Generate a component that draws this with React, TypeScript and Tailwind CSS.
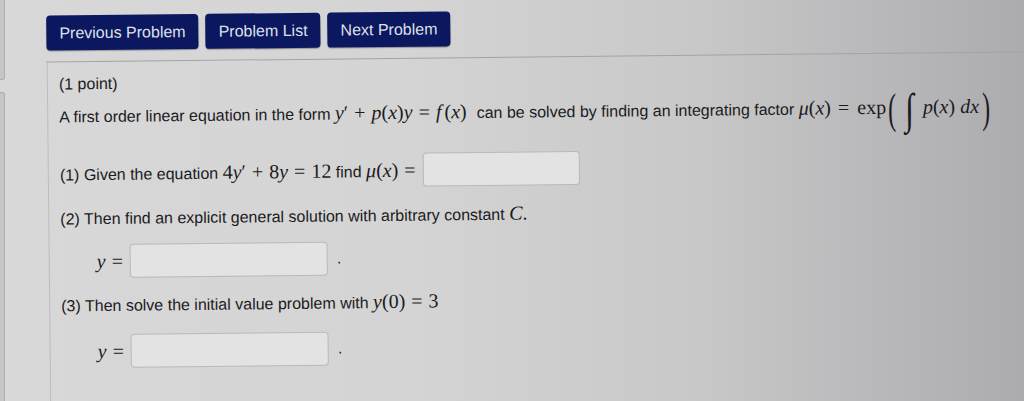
import React from 'react';

const serif = "font-['Liberation_Serif','Times_New_Roman',serif]";

const Op: React.FC<{ children: React.ReactNode }> = ({ children }) => (
  <span className="mx-[6px] not-italic">{children}</span>
);

const AnswerBox: React.FC<{ w: string }> = ({ w }) => (
  <div className={`${w} h-[34px] rounded-[4px] border border-[#b9b9bb] bg-[#e3e3e3]`} />
);

const NavButton: React.FC<{ label: string }> = ({ label }) => (
  <button className="h-[35px] px-[13px] rounded-[4px] bg-[#0b175e] text-[16px] text-[#dfe0ea] shadow-[0_1px_1px_rgba(0,0,0,0.3)]">
    {label}
  </button>
);

const App: React.FC = () => {
  return (
    <div className="w-[1024px] h-[401px] overflow-hidden flex bg-[linear-gradient(90deg,#d8d8d8_0%,#d4d4d4_40%,#c8c8c8_68%,#acacb0_100%)] text-[#1b1b1d] font-['Liberation_Sans',Arial,sans-serif]">
      {/* side rail */}
      <div className="w-[5px] shrink-0 flex flex-col">
        <div className="h-[80px] bg-[#c6c6c6] border-r border-b border-[#aeaeae] rounded-br-[3px]" />
        <div className="mt-[12px] flex-1 bg-[#c6c6c6] border-r border-t border-[#aeaeae] rounded-tr-[3px]" />
      </div>

      <div className="flex-1 pl-[41px] pt-[16px] origin-top-left -rotate-[0.6deg]">
        <div className="flex gap-[7px]">
          <NavButton label="Previous Problem" />
          <NavButton label="Problem List" />
          <NavButton label="Next Problem" />
        </div>

        <div className="mt-[11px] w-[1100px] h-[400px] border-t border-l border-t-[#a3a3a5] border-l-[#bdbdbd] pl-[11px] pt-[12px] text-[16px]">
          <div className="leading-[20px]">(1 point)</div>

          <div className="h-[42px] leading-[42px] whitespace-nowrap">
            A first order linear equation in the form{' '}
            <span className={`${serif} text-[20px]`}>
              <i>y</i>′<Op>+</Op>
              <i>p</i>(<i>x</i>)<i>y</i>
              <Op>=</Op>
              <i className="mr-[3px]">f</i>(<i>x</i>)
            </span>
            <span className="ml-[10px]">can be solved by finding an integrating factor</span>{' '}
            <span className={`${serif} text-[20px]`}>
              <i>μ</i>(<i>x</i>)<span className="ml-[7px] mr-[8px]">=</span>exp
              <span className="inline-block align-middle text-[24px] scale-y-[1.8] ml-[2px]">(</span>
              <span className="inline-block align-middle italic text-[32px] scale-y-[1.35] ml-[9px] mr-[9px]">∫</span>
              <i>p</i>(<i>x</i>)<span className="ml-[5px]"><i>dx</i></span>
              <span className="inline-block align-middle text-[24px] scale-y-[1.8] ml-[3px]">)</span>
            </span>
          </div>

          <div className="mt-[20px] flex items-center">
            <span className="whitespace-nowrap">
              (1) Given the equation{' '}
              <span className={`${serif} text-[20px]`}>
                4<i>y</i>′<Op>+</Op>8<i>y</i>
                <Op>=</Op>12
              </span>{' '}
              find{' '}
              <span className={`${serif} text-[20px]`}>
                <i>μ</i>(<i>x</i>)<Op>=</Op>
              </span>
            </span>
            <div className="ml-[1px]">
              <AnswerBox w="w-[157px]" />
            </div>
          </div>

          <div className="mt-[17px] leading-[20px]">
            (2) Then find an explicit general solution with arbitrary constant{' '}
            <span className={`${serif} text-[20px]`}>
              <i>C</i>.
            </span>
          </div>

          <div className="mt-[15px] pl-[36px] flex items-center">
            <span className={`${serif} text-[20px] whitespace-nowrap`}>
              <i>y</i>
              <Op>=</Op>
            </span>
            <div className="ml-[1px]">
              <AnswerBox w="w-[198px]" />
            </div>
            <span className="ml-[9px]">.</span>
          </div>

          <div className="mt-[16px] leading-[20px]">
            (3) Then solve the initial value problem with{' '}
            <span className={`${serif} text-[20px]`}>
              <i>y</i>(0)<Op>=</Op>3
            </span>
          </div>

          <div className="mt-[18px] pl-[36px] flex items-center">
            <span className={`${serif} text-[20px] whitespace-nowrap`}>
              <i>y</i>
              <Op>=</Op>
            </span>
            <div className="ml-[1px]">
              <AnswerBox w="w-[198px]" />
            </div>
            <span className="ml-[9px]">.</span>
          </div>
        </div>
      </div>
    </div>
  );
};

export default App;
